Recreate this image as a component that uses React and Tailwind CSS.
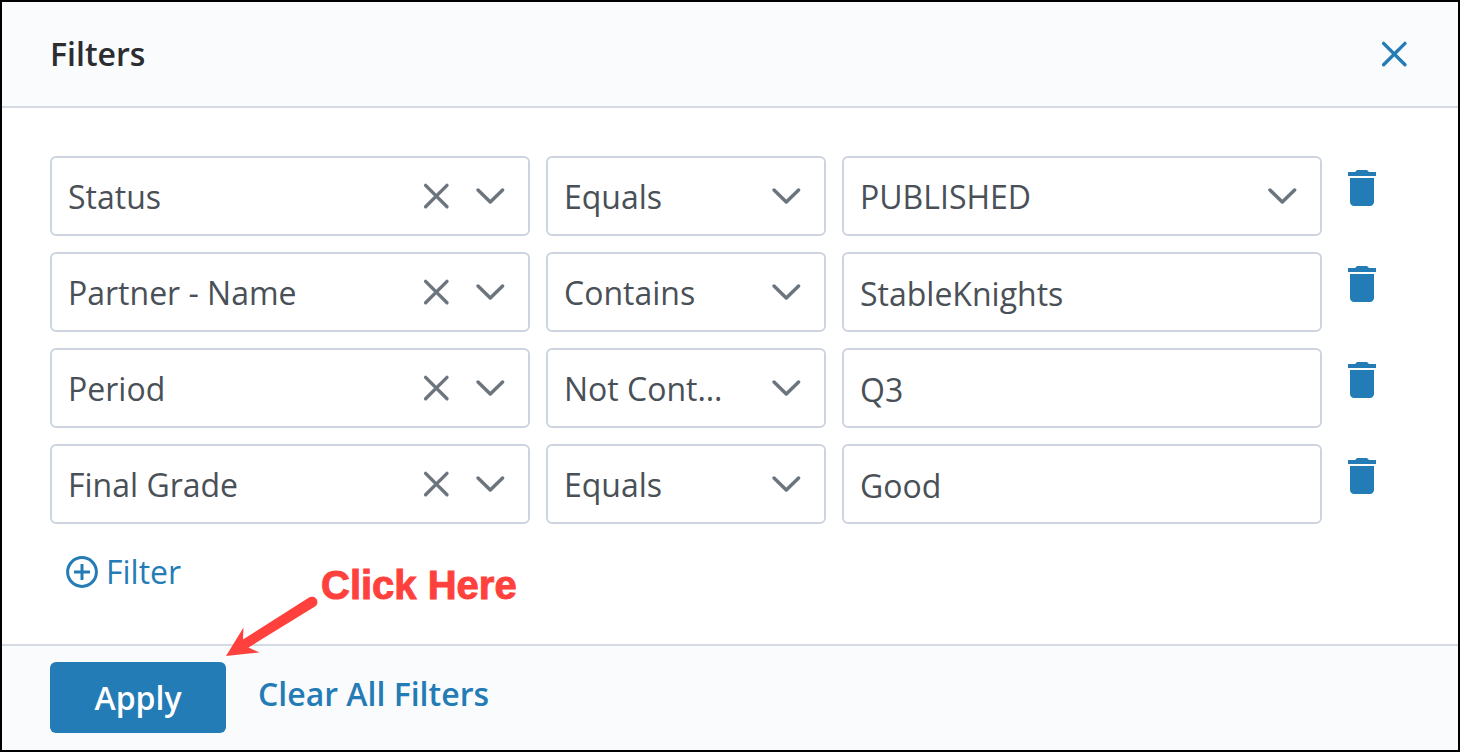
import { useState } from "react";

const FIELDS = ["Status", "Partner - Name", "Period", "Final Grade"];
const OPERATORS = ["Equals", "Contains", "Not Contains"];
const STATUSES = ["PUBLISHED", "DRAFT"];

const INITIAL_FILTERS = [
  { id: 1, field: "Status", operator: "Equals", value: "PUBLISHED" },
  { id: 2, field: "Partner - Name", operator: "Contains", value: "StableKnights" },
  { id: 3, field: "Period", operator: "Not Contains", value: "Q3" },
  { id: 4, field: "Final Grade", operator: "Equals", value: "Good" },
];

const CrossIcon = ({ className }) => (
  <svg viewBox="0 0 28 28" fill="none" stroke="currentColor" strokeWidth="3.4" strokeLinecap="round" className={className}>
    <path d="M3.6 3.4L25 24.8M25 3.4L3.6 24.8" />
  </svg>
);

const ChevronIcon = () => (
  <svg viewBox="0 0 32 32" fill="none" stroke="currentColor" strokeWidth="3.5" strokeLinecap="round" strokeLinejoin="round" className="h-8 w-8">
    <path d="M4 10L16.3 22L28.6 10" />
  </svg>
);

const TrashIcon = () => (
  <svg viewBox="10 6 28 36" fill="currentColor" className="h-9 w-7">
    <path d="M12 38c0 2.2 1.8 4 4 4h16c2.2 0 4-1.8 4-4V14H12v24zM38 8h-7l-2-2H19l-2 2h-7v4h28V8z" />
  </svg>
);

const PlusCircleIcon = () => (
  <svg viewBox="0 0 32 32" fill="none" stroke="currentColor" strokeWidth="3" className="h-8 w-8">
    <circle cx="16" cy="16" r="14.4" />
    <path d="M16 8V24M8 16H24" />
  </svg>
);

function SelectBox({ label, value, options, onChange, onClear }) {
  return (
    <div className="relative min-w-0">
      <select
        aria-label={label}
        value={value}
        onChange={(e) => onChange(e.target.value)}
        className={`h-20 w-full appearance-none truncate rounded-md border-2 border-[#ced4df] bg-white pt-0.5 pl-4 text-[#495057] ${
          onClear ? "pr-28" : "pr-24"
        }`}
      >
        {!value && <option value=""></option>}
        {options.map((option) => (
          <option key={option}>{option}</option>
        ))}
      </select>
      <div className="pointer-events-none absolute inset-y-0 right-6 flex items-center gap-6 text-[#6c757d]">
        {onClear && (
          <button type="button" aria-label={`Clear ${label}`} onClick={onClear} className="pointer-events-auto">
            <CrossIcon className="h-7 w-7" />
          </button>
        )}
        <ChevronIcon />
      </div>
    </div>
  );
}

export default function App() {
  const [filters, setFilters] = useState(INITIAL_FILTERS);

  const updateFilter = (id, changes) =>
    setFilters(filters.map((f) => (f.id === id ? { ...f, ...changes } : f)));

  const addFilter = () =>
    setFilters([...filters, { id: Date.now(), field: "", operator: "Equals", value: "" }]);

  return (
    <div className="flex min-h-screen flex-col border-2 border-black bg-white font-['Open_Sans',sans-serif] text-[32px] leading-[44px]">
      {/* Header */}
      <header className="flex h-[106px] items-center justify-between border-b-2 border-[#d4dae1] bg-[#fafbfd] px-12">
        <h1 className="font-semibold text-[#2b2d30]">Filters</h1>
        <button type="button" aria-label="Close" className="text-[#237cb5]">
          <CrossIcon className="h-8 w-8 p-0.5" />
        </button>
      </header>

      {/* Filter rows */}
      <main className="flex-1 px-12 pt-12 pb-10">
        <div className="space-y-4">
          {filters.map((f) => (
            <div key={f.id} className="grid grid-cols-[12fr_7fr_12fr_72px] gap-4">
              <SelectBox
                label="Field"
                value={f.field}
                options={FIELDS}
                onChange={(field) => updateFilter(f.id, { field })}
                onClear={() => updateFilter(f.id, { field: "" })}
              />
              <SelectBox
                label="Operator"
                value={f.operator}
                options={OPERATORS}
                onChange={(operator) => updateFilter(f.id, { operator })}
              />
              {f.field === "Status" ? (
                <SelectBox
                  label="Value"
                  value={f.value}
                  options={STATUSES}
                  onChange={(value) => updateFilter(f.id, { value })}
                />
              ) : (
                <input
                  type="text"
                  aria-label="Value"
                  value={f.value}
                  onChange={(e) => updateFilter(f.id, { value: e.target.value })}
                  className="h-20 w-full min-w-0 rounded-md border-2 border-[#ced4df] bg-white px-4 pt-0.5 text-[#495057]"
                />
              )}
              <button
                type="button"
                aria-label="Delete filter"
                onClick={() => setFilters(filters.filter((x) => x.id !== f.id))}
                className="self-start px-2.5 pt-3.5 text-[#237cb5]"
              >
                <TrashIcon />
              </button>
            </div>
          ))}
        </div>
        <button type="button" onClick={addFilter} className="mt-4 flex h-16 items-center gap-2 pl-4 text-[#237cb5]">
          <PlusCircleIcon />
          Filter
        </button>
      </main>

      {/* Footer */}
      <footer className="relative flex items-start gap-8 border-t-2 border-[#d4dae1] bg-[#fafbfd] px-12 pt-4 pb-[17px]">
        <button type="button" className="h-[71px] w-44 rounded-md bg-[#237cb5] font-semibold text-white">
          Apply
        </button>
        <button type="button" onClick={() => setFilters([])} className="h-16 font-semibold text-[#237cb5]">
          Clear All Filters
        </button>

        {/* Callout pointing at the apply button */}
        <div className="pointer-events-none absolute bottom-[94px] left-[224px] flex items-start text-[#ff413d]">
          <svg viewBox="226 596 92 60" fill="currentColor" className="mt-[33px] h-[60px] w-[92px]">
            <path d="M226 656L243.5 627.5L243 639.5L309 597.6A5.4 5.4 0 0 1 315 606.6L248.5 647.5L259.5 652.5Z" />
          </svg>
          <span className="pl-[3px] font-['Liberation_Sans',Arial,sans-serif] text-[40px] leading-[44px] font-bold [-webkit-text-stroke:1px]">
            Click Here
          </span>
        </div>
      </footer>
    </div>
  );
}
